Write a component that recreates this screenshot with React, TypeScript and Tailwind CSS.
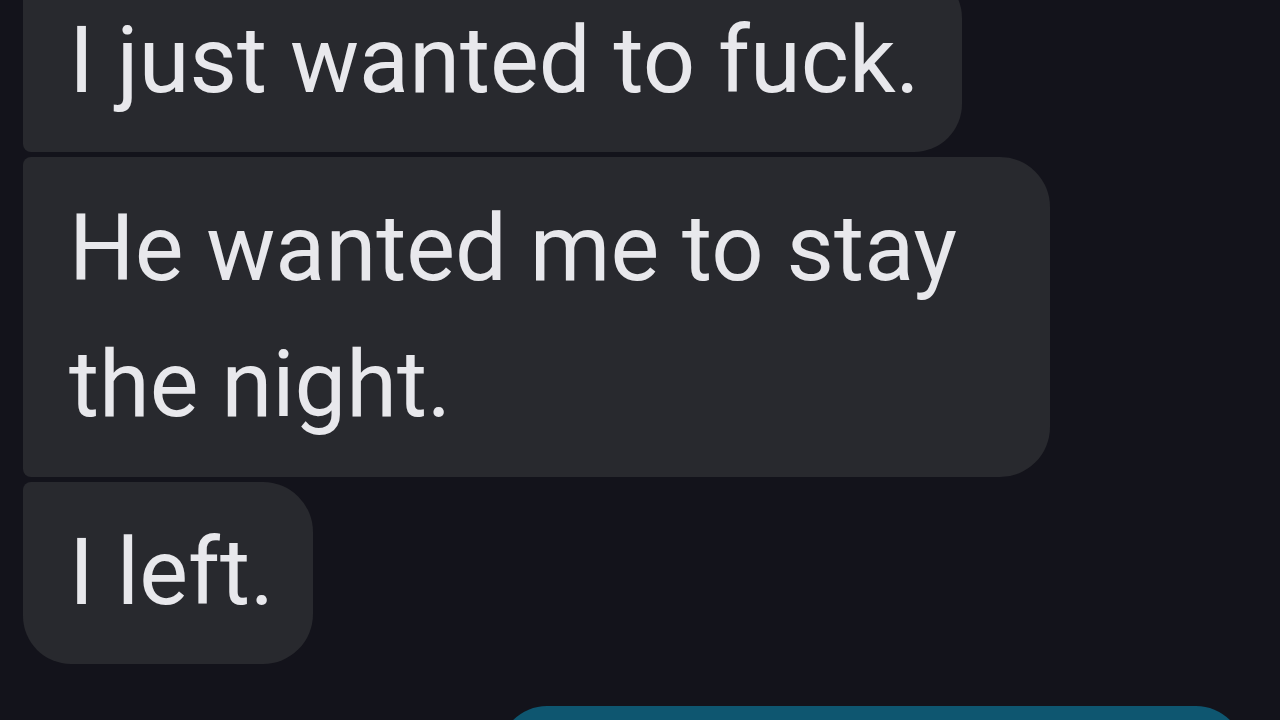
export default function App() {
  const font = { fontFamily: 'Roboto, "Open Sans", sans-serif' };
  return (
    <div className="w-[1280px] h-[720px] overflow-hidden bg-[#13131b]" style={font}>
      <div className="flex flex-col items-start gap-[5px] pl-[23px] -mt-[30px]">
        <div className="bg-[#28292e] text-[#e8e8ec] text-[92px] leading-[136px] whitespace-nowrap pl-[46px] pr-[20px] py-[23px] w-[939px] rounded-tl-[8px] rounded-bl-[8px] rounded-tr-[48px] rounded-br-[48px]">
          I just wanted to fuck.
        </div>
        <div className="bg-[#28292e] text-[#e8e8ec] text-[92px] leading-[136px] whitespace-nowrap pl-[46px] pr-[20px] py-[24px] w-[1027px] rounded-tl-[8px] rounded-bl-[8px] rounded-tr-[50px] rounded-br-[50px]">
          He wanted me to stay<br />the night.
        </div>
        <div className="bg-[#28292e] text-[#e8e8ec] text-[92px] leading-[136px] whitespace-nowrap pl-[46px] py-[23px] w-[290px] rounded-tl-[8px] rounded-bl-[48px] rounded-tr-[50px] rounded-br-[50px]">
          I left.
        </div>
      </div>
      <div className="flex justify-end pr-[36px] mt-[42px]">
        <div className="w-[745px] h-[120px] bg-[#0e5670] rounded-t-[48px]" />
      </div>
    </div>
  );
}
